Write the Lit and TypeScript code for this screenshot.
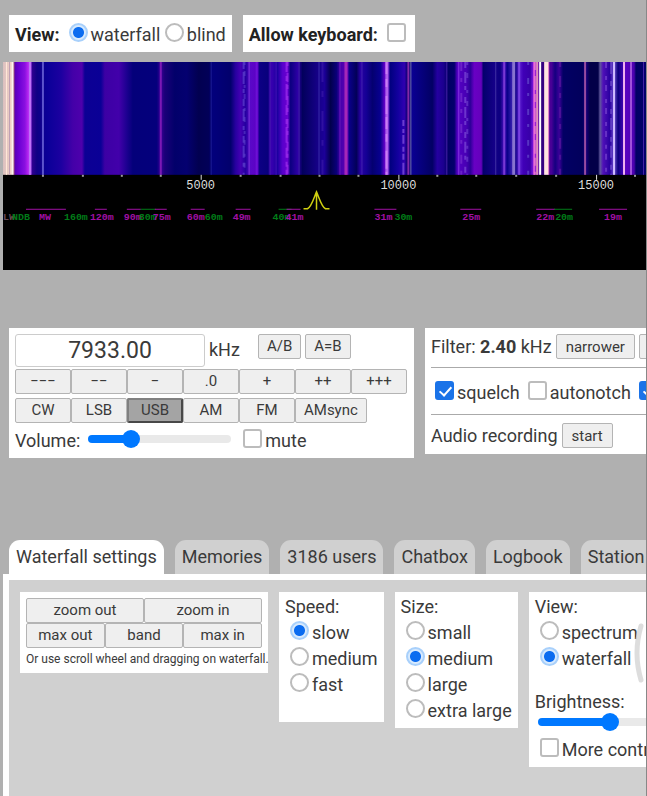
import { LitElement, html, svg, css } from "lit";
import { customElement, state } from "lit/decorators.js";
import { classMap } from "lit/directives/class-map.js";

// Signal strength across the band: [position, colour]
const SPECTRUM: [number, string][] = [
  [0, "#dcc0c0"], [8, "#f0d0c4"], [10, "#ffffff"], [11, "#a05070"], [12, "#5a00b8"], [16, "#6c00d4"],
  [22, "#8a10e0"], [25, "#b424f0"], [28, "#c060ff"], [29, "#300090"], [34, "#100084"], [44, "#0a0098"],
  [58, "#1c00a0"], [70, "#4400a8"], [79, "#4e00ac"], [82, "#0c0094"], [98, "#0a0096"], [102, "#3c00a4"],
  [116, "#4200aa"], [124, "#1c0090"], [130, "#04007a"], [154, "#04007c"], [158, "#3a0098"], [162, "#1a0078"],
  [172, "#02006a"], [184, "#040070"], [196, "#020050"], [206, "#020058"], [210, "#02007c"], [228, "#02006c"],
  [233, "#2800a0"], [238, "#4400b4"], [243, "#2400a0"], [248, "#5a08c8"], [255, "#5c00c4"], [257, "#0c0084"],
  [265, "#08007c"], [269, "#3800b0"], [275, "#1c00a0"], [280, "#5800cc"], [285, "#6a00d0"], [288, "#0c0080"],
  [295, "#2c00a4"], [300, "#02005c"], [314, "#140084"], [322, "#1c0098"], [328, "#02004c"], [334, "#0a0078"],
  [338, "#4400ac"], [345, "#6200b4"], [347, "#0a0088"], [354, "#020058"], [358, "#2800a4"], [364, "#140094"],
  [370, "#040070"], [378, "#080090"], [382, "#5c00c4"], [385, "#7c18d8"], [388, "#020080"], [396, "#1400a0"],
  [402, "#3000b0"], [406, "#02005c"], [409, "#0a0094"], [430, "#020064"], [435, "#2400a0"], [441, "#1c0090"],
  [446, "#020064"], [452, "#04006c"], [455, "#5400c4"], [464, "#4800b4"], [468, "#2c0098"], [472, "#6800c4"],
  [479, "#6400bc"], [481, "#04006c"], [492, "#140088"], [498, "#0c0080"], [502, "#4c10c0"], [505, "#080088"],
  [510, "#3820b0"], [513, "#0c0084"], [517, "#5c20d0"], [521, "#4000b8"], [528, "#3800a8"], [530, "#6c10d0"],
  [534, "#9018d0"], [539, "#30007c"], [549, "#4c0098"], [553, "#140080"], [557, "#3c0098"], [561, "#020064"],
  [580, "#02005c"], [584, "#18007c"], [588, "#020048"], [596, "#020048"], [598, "#60589c"], [601, "#5010b8"],
  [608, "#2800a0"], [612, "#7050d0"], [616, "#0c007c"], [620, "#3400a8"], [624, "#5800c0"], [632, "#4c00b0"],
  [634, "#020064"], [644, "#04006c"],
];

// Steady carriers: [x, width, colour]
const CARRIERS: [number, number, string][] = [
  [3, 1, "#ffe8d8"], [6, 1, "#c0a0b4"], [26, 2, "#c070f8"], [39, 2, "#5c54cc"], [157, 2, "#7c18b4"],
  [208, 1, "#1c1c98"], [246, 1, "#8038dc"], [253, 2, "#6c10d4"], [267, 1, "#5018b8"], [273, 1, "#4010b4"],
  [296, 1, "#4820b4"], [316, 1, "#382ca8"], [337, 1, "#6c18b8"], [342, 3, "#a428b8"], [359, 1, "#4420b0"],
  [383, 3, "#b060ec"], [405, 2, "#8428a8"], [408, 1, "#7070a8"], [444, 1, "#4420a4"], [456, 1, "#8838e0"],
  [493, 1, "#4030a4"], [501, 2, "#7838d4"], [510, 3, "#8874d0"], [516, 2, "#7840e0"], [531, 2, "#d858dc"],
  [534, 2, "#e090b8"], [537, 2, "#ffffff"], [542, 4, "#ffe4e0"], [546, 1, "#f490d0"], [582, 2, "#984ca0"],
  [611, 2, "#d0bcff"], [621, 2, "#f0b0f0"], [628, 2, "#a050dc"], [641, 1, "#4420a8"],
];

// Fluttering carriers: [x, colour, dash pattern]
const FADING: [number, string, string][] = [
  [241, "#6c58dc", "7 3 12 5 4 6"], [242, "#6448d0", "3 6 5 9"], [284, "#b040f8", "10 4 5 3 16 5"],
  [285, "#a838f0", "4 7 9 3"], [320, "#4420b0", "20 9 6 14"], [384, "#e498ff", "12 5 8 9 18 3"],
  [401, "#a878f4", "0 58 6 3 4 2 9 3 5 2 6 3 20"], [463, "#9068e4", "6 4 11 3 4 7"],
  [465, "#7c50d8", "3 8 5 12"], [459, "#8840d4", "9 7 4 11"], [526, "#7468d8", "3 13 6 9"],
  [533, "#ff98c8", "8 6 14 4"], [558, "#6c20a8", "5 9 11 6"], [604, "#8c58dc", "6 8 4 5"],
  [609, "#8060d8", "12 7 5 4"],
];

const MINOR_TICKS = [40, 80, 119, 158, 238, 278, 317, 356, 435, 474, 514, 554, 633];
const MAJOR_TICKS: [number, string][] = [[198, "5000"], [396, "10000"], [594, "15000"]];

// Band names under the scale: [centre, name, kind, line start, line end]
const BANDS: [number, string, string, number, number][] = [
  [6, "LW", "dim", 1, 1], [18, "NDB", "ham", 12, 12], [42, "MW", "cast", 23, 63],
  [73, "160m", "ham", 66, 66], [99, "120m", "cast", 92, 104], [130, "90m", "cast", 124, 138],
  [145, "80m", "ham", 138, 153], [159, "75m", "cast", 152, 164], [193, "60m", "cast", 188, 202],
  [211, "60m", "ham", 208, 208], [239, "49m", "cast", 233, 248], [279, "40m", "ham", 276, 289],
  [292, "41m", "cast", 284, 298], [381, "31m", "cast", 372, 394], [401, "30m", "ham", 397, 397],
  [469, "25m", "cast", 458, 479], [543, "22m", "cast", 534, 553], [562, "20m", "ham", 552, 570],
  [611, "19m", "cast", 597, 625],
];

@customElement("app-root")
export class AppRoot extends LitElement {
  @state() private mode = "USB";
  @state() private tab = "Waterfall settings";

  static styles = css`
    :host {
      display: flex;
      flex-direction: column;
      box-sizing: border-box;
      min-height: 100vh;
      padding-top: 15px;
      overflow: hidden;
      background: #b0b0b0;
      border-right: 1px solid #888;
      color: #3a3a3a;
      font: 18px/26px Roboto, "Liberation Sans", sans-serif;
    }
    * { box-sizing: border-box; }
    .row { display: flex; align-items: center; }
    .panels { display: flex; align-items: flex-start; gap: 11px; padding-left: 9px; white-space: nowrap; }
    .panel { flex: none; background: #fff; padding: 6px; }
    .top .panel { height: 37px; padding-top: 8px; display: flex; align-items: center; }
    .top b { color: #222; margin-right: 9px; }
    label { display: flex; align-items: center; }
    input, button { font-family: inherit; color: inherit; margin: 0; }
    input[type="radio"], input[type="checkbox"] {
      appearance: none;
      flex: none;
      width: 19px;
      height: 19px;
      margin-right: 3px;
      margin-bottom: 4px;
      background: #fff;
      border: 2px solid #bcbcbc;
    }
    input[type="radio"] { border-radius: 50%; }
    input[type="radio"]:checked {
      border: 2px solid #a8d0fb;
      background: radial-gradient(circle, #0b6cf0 5px, #d8eafd 6px);
    }
    input[type="checkbox"] { border-radius: 3px; }
    input[type="checkbox"]:checked { border-color: #1a73e8; background: #1a73e8; position: relative; }
    input[type="checkbox"]:checked::after {
      content: "";
      position: absolute;
      left: 5px;
      top: 1px;
      width: 5px;
      height: 10px;
      border: solid #fff;
      border-width: 0 2px 2px 0;
      rotate: 42deg;
    }
    input[type="range"] { appearance: none; height: 18px; background: none; }
    .volume {
      --fill: 30%;
      width: 143px;
      margin: 0 12px 4px 8px;
    }
    .bright { --fill: 54%; width: 133px; margin-left: 3px; display: block; }
    input[type="range"]::-webkit-slider-runnable-track {
      height: 8px;
      border-radius: 4px;
      background: linear-gradient(to right, #0078ff var(--fill), #e9e9e9 var(--fill));
    }
    input[type="range"]::-webkit-slider-thumb {
      appearance: none;
      width: 18px;
      height: 18px;
      margin-top: -5px;
      border-radius: 50%;
      background: #0078ff;
    }
    button {
      height: 25px;
      padding: 0 9px;
      border: 1px solid #b4b4b4;
      border-radius: 2px;
      background: #efefef;
      font-size: 15px;
      line-height: 20px;
    }
    .waterfall { display: block; margin: 10px 0 58px 3px; background: #000; }
    .waterfall svg { display: block; width: 100%; }
    .scale { fill: #ddd; font: 12px "Liberation Mono", monospace; text-anchor: middle; }
    .band { font: bold 10px "Liberation Mono", monospace; text-anchor: middle; }
    .cast { fill: #a010a4; }
    .ham { fill: #007c18; }
    .dim { fill: #684858; }
    .tuner { width: 405px; height: 130px; }
    .frequency {
      width: 190px;
      height: 33px;
      margin-right: 4px;
      border: 1px solid #ccc;
      border-radius: 3px;
      text-align: center;
      font-size: 23px;
    }
    .swap { display: flex; gap: 4px; margin: 0 0 8px 18px; }
    .swap button { padding: 0 8px; }
    .keys { display: flex; margin-top: 2px; }
    .keys button { min-width: 56px; padding: 0 8px; }
    .keys + .keys { margin-top: 4px; }
    .keys .on { background: #a4a4a4; border: 2px solid; border-color: #808080 #484848 #484848 #808080; }
    .sound { height: 36px; }
    .filter { width: 405px; padding-bottom: 5px; }
    .filter .row { height: 26px; gap: 4px; }
    .filter label { margin-left: 4px; }
    hr { width: 100%; height: 1px; margin: 7px 0 12px; border: 0; background: #aaa; }
    hr.second { margin: 8px 0; }
    .tabs { display: flex; gap: 11px; margin-top: 82px; padding-left: 9px; }
    .tabs button {
      flex: none;
      height: 34px;
      padding: 0 7px;
      border: 0;
      border-radius: 11px 11px 0 0;
      background: #d0d0d0;
      font-size: 18px;
    }
    .tabs .on { background: #fff; }
    .sheet {
      flex: 1;
      display: flex;
      gap: 11px;
      align-items: flex-start;
      margin-left: 3px;
      padding: 12px 11px;
      border: solid #fff;
      border-width: 6px 0 0 6px;
      background: #d0d0d0;
      white-space: nowrap;
      overflow: hidden;
    }
    .zoom { width: 248px; height: 81px; }
    .zoom .row button { flex: 1; padding: 0; }
    .zoom small { display: block; font-size: 12px; line-height: 22px; }
    .choice { padding: 2px 6px 4px; }
    .choice label { padding-left: 5px; }
    .speed { padding-bottom: 24px; }
    .look { width: 200px; position: relative; }
    .look .title { margin-top: 19px; line-height: 22px; }
    .look .more { margin-top: 6px; }
    .look .arc { position: absolute; left: 104px; top: 29px; width: 12px; height: 64px; }
  `;

  private radio(group: string, name: string, checked = false) {
    return html`<label><input type="radio" name=${group} .checked=${checked} />${name}</label>`;
  }

  private check(name: string, checked = false) {
    return html`<label><input type="checkbox" .checked=${checked} />${name}</label>`;
  }

  private waterfall() {
    return html`<div class="waterfall">
      <svg viewBox="0 0 644 208" role="img" aria-label="Waterfall display">
        <defs>
          <linearGradient id="spectrum" gradientUnits="userSpaceOnUse" x1="0" x2="644" y1="0" y2="0">
            ${SPECTRUM.map(([x, c]) => svg`<stop offset=${x / 644} stop-color=${c}></stop>`)}
          </linearGradient>
        </defs>
        <rect width="644" height="113" fill="url(#spectrum)"></rect>
        ${CARRIERS.map(([x, w, c]) => svg`<rect x=${x} width=${w} height="113" fill=${c}></rect>`)}
        ${FADING.map(([x, c, d]) => svg`<path d=${`M${x} 0V113`} stroke=${c} stroke-width="2" stroke-dasharray=${d} opacity=".5"></path>`)}
        ${MINOR_TICKS.map((x) => svg`<rect x=${x - 1} y="113" width="2" height="2" fill="#999"></rect>`)}
        ${MAJOR_TICKS.map(([x, n]) => svg`
          <rect x=${x} y="113" width="1" height="5" fill="#ddd"></rect>
          <text class="scale" x=${x} y="127">${n}</text>`)}
        ${BANDS.map(([x, n, k, a, b]) => svg`
          <rect class=${k} x=${a} y="147" width=${b - a} height="1"></rect>
          <text class=${`band ${k}`} x=${x} y="158">${n}</text>`)}
        <path d="M301 147h4c4-2 6-10 9-17c3 7 5 15 9 17h4M314 130v18" fill="none" stroke="#d0d010" stroke-width="1.5"></path>
      </svg>
    </div>`;
  }

  render() {
    const steps = ["−−−", "−−", "−", ".0", "+", "++", "+++"];
    const modes = ["CW", "LSB", "USB", "AM", "FM", "AMsync"];
    const tabs = ["Waterfall settings", "Memories", "3186 users", "Chatbox", "Logbook", "Station info"];
    return html`
      <div class="panels top">
        <div class="panel"><b>View:</b>${this.radio("page", "waterfall", true)}&nbsp;${this.radio("page", "blind")}</div>
        <div class="panel"><b id="kbd">Allow keyboard:</b><input type="checkbox" aria-labelledby="kbd" /></div>
      </div>
      ${this.waterfall()}
      <div class="panels">
        <div class="panel tuner">
          <div class="row">
            <input class="frequency" aria-label="Frequency" value="7933.00" />kHz
            <div class="swap"><button>A/B</button><button>A=B</button></div>
          </div>
          <div class="keys">${steps.map((s) => html`<button>${s}</button>`)}</div>
          <div class="keys">${modes.map((m) => html`<button
            class=${classMap({ on: m === this.mode })} @click=${() => (this.mode = m)}>${m}</button>`)}</div>
          <div class="row sound">
            <label>Volume:<input class="volume" type="range" value="27" /></label>${this.check("mute")}
          </div>
        </div>
        <div class="panel filter">
          <div class="row"><span>Filter: <b>2.40</b> kHz</span><button>narrower</button><button>wider</button></div>
          <hr />
          <div class="row">${this.check("squelch", true)}${this.check("autonotch")}${this.check("noise", true)}</div>
          <hr class="second" />
          <div class="row">Audio recording <button>start</button></div>
        </div>
      </div>
      <nav class="tabs">${tabs.map((t) => html`<button
        class=${classMap({ on: t === this.tab })} @click=${() => (this.tab = t)}>${t}</button>`)}</nav>
      <div class="sheet">
        <div class="panel zoom">
          <div class="row"><button>zoom out</button><button>zoom in</button></div>
          <div class="row"><button>max out</button><button>band</button><button>max in</button></div>
          <small>Or use scroll wheel and dragging on waterfall.</small>
        </div>
        <div class="panel choice speed">Speed:
          ${this.radio("speed", "slow", true)}${this.radio("speed", "medium")}${this.radio("speed", "fast")}
        </div>
        <div class="panel choice">Size:
          ${this.radio("size", "small")}${this.radio("size", "medium", true)}${this.radio("size", "large")}${this.radio("size", "extra large")}
        </div>
        <div class="panel choice look">View:
          ${this.radio("view", "spectrum")}${this.radio("view", "waterfall", true)}
          <div class="title" id="bright">Brightness:</div>
          <input class="bright" type="range" value="55" aria-labelledby="bright" />
          <div class="more">${this.check("More controls")}</div>
          <svg class="arc" viewBox="0 0 12 64" aria-hidden="true">
            <path d="M8 5Q0 32 8 59" fill="none" stroke="#d4d4d4" stroke-opacity=".8" stroke-width="5" stroke-linecap="round"></path>
          </svg>
        </div>
      </div>
    `;
  }
}
